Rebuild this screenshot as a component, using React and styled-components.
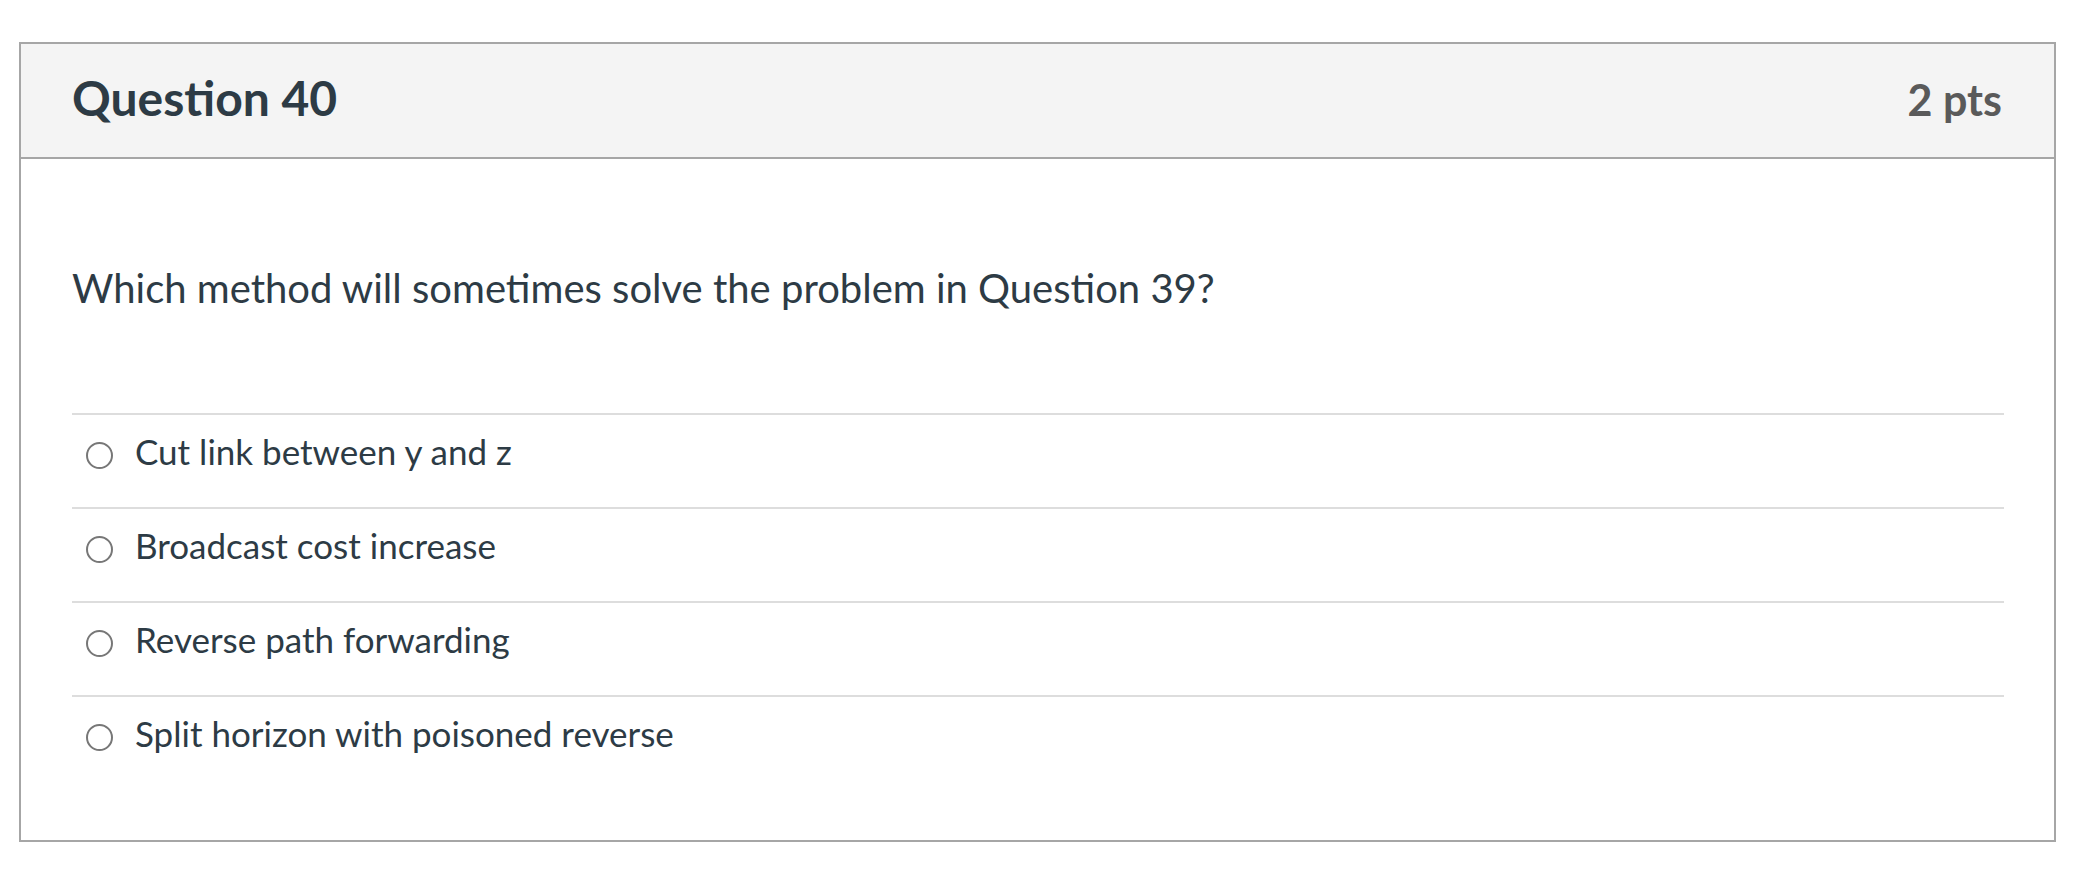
import React from "react";
import styled, { createGlobalStyle } from "styled-components";

const answers = [
  "Cut link between y and z",
  "Broadcast cost increase",
  "Reverse path forwarding",
  "Split horizon with poisoned reverse",
];

const App = () => {
  return (
    <>
      <GlobalStyle />
      <StPage>
        <StQuestion>
          <StHeader>
            <StTitle>Question 40</StTitle>
            <StPoints>2 pts</StPoints>
          </StHeader>
          <StBody>
            <StQuestionText>Which method will sometimes solve the problem in Question 39?</StQuestionText>
            <StAnswers>
              {answers.map((answer) => (
                <StAnswerRow key={answer}>
                  <StRadio />
                  <StAnswerText>{answer}</StAnswerText>
                </StAnswerRow>
              ))}
            </StAnswers>
          </StBody>
        </StQuestion>
      </StPage>
    </>
  );
};

export default App;

const GlobalStyle = createGlobalStyle`
  body {
    margin: 0;
    background: #ffffff;
    font-family: Lato, "Open Sans", sans-serif;
  }
`;

const StPage = styled.div`
  padding: 42px 39px 32px 19px;
`;

const StQuestion = styled.div`
  border: 2px solid #a6a6a6;
  background: #ffffff;
`;

const StHeader = styled.div`
  box-sizing: border-box;
  height: 115px;
  padding: 25px 52px 0 51px;
  background: #f4f4f4;
  border-bottom: 2px solid #a6a6a6;
  display: flex;
  flex-direction: row;
  justify-content: space-between;
  align-items: baseline;
`;

const StTitle = styled.h2`
  margin: 0;
  font-size: 48px;
  line-height: 1.2;
  font-weight: 700;
  color: #2d3b45;
`;

const StPoints = styled.div`
  font-size: 43px;
  line-height: 1.2;
  font-weight: 700;
  color: #5a5a5a;
`;

const StBody = styled.div`
  padding: 0 50px 51px 51px;
`;

const StQuestionText = styled.p`
  margin: 100px 0 96px 0;
  font-size: 40px;
  line-height: 58px;
  color: #2d3b45;
`;

const StAnswers = styled.div`
  display: flex;
  flex-direction: column;
`;

const StAnswerRow = styled.label`
  display: flex;
  flex-direction: row;
  align-items: flex-start;
  padding: 15px 0 35px 14px;
  border-top: 2px solid #dddddd;
`;

const StRadio = styled.span`
  box-sizing: border-box;
  width: 27px;
  height: 27px;
  margin-top: 12px;
  margin-right: 22px;
  border: 2px solid #777777;
  border-radius: 50%;
  flex-shrink: 0;
`;

const StAnswerText = styled.span`
  font-size: 35px;
  line-height: 42px;
  color: #2d3b45;
`;
